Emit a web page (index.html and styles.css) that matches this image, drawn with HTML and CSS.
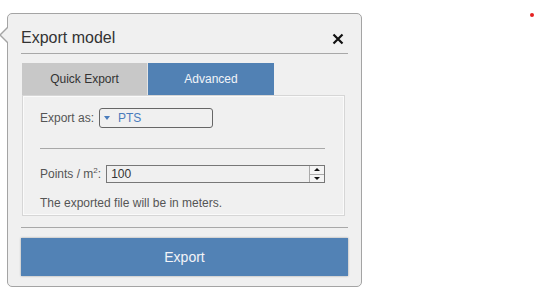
FILE: index.html
```html
<!DOCTYPE html>
<html>
<head>
    <meta charset="UTF-8">
    <meta name="viewport" content="width=device-width, initial-scale=1.0">
    <link rel="stylesheet" href="styles.css">
</head>
<body>
    <span class="dot"></span>
    <div class="popover">
        <div class="popover-header">
            <h2 class="title">Export model</h2>
            <span class="close">
                <svg width="12" height="12" viewBox="0 0 12 12">
                    <path d="M1.5 1.5 L10.5 10.5 M10.5 1.5 L1.5 10.5" stroke="#111" stroke-width="2.2" fill="none"/>
                </svg>
            </span>
        </div>

        <div class="tabs">
            <div class="tab">Quick Export</div>
            <div class="tab active">Advanced</div>
        </div>

        <div class="tab-body">
            <div class="form-row first">
                <label>Export as:</label>
                <div class="select">
                    <span class="caret"></span>
                    <span>PTS</span>
                </div>
            </div>

            <div class="sep"></div>

            <div class="form-row second">
                <label>Points / m<sup>2</sup>:</label>
                <div class="number">
                    <span class="value">100</span>
                    <span class="spin">
                        <span class="spin-up"></span>
                        <span class="spin-down"></span>
                    </span>
                </div>
            </div>

            <p class="note">The exported file will be in meters.</p>
        </div>

        <div class="footer-line"></div>

        <button type="button" class="export-btn">Export</button>
    </div>
</body>
</html>
```

FILE: styles.css
```css
* {
    box-sizing: border-box;
}

body {
    margin: 0;
    background-color: #fff;
    font-family: "Liberation Sans", Arial, sans-serif;
    color: #444;
}

.dot {
    position: absolute;
    left: 530px;
    top: 13px;
    width: 4px;
    height: 4px;
    border-radius: 2px;
    background-color: #e52222;
}

.popover {
    position: relative;
    margin: 13px 0 0 7px;
    width: 355px;
    height: 274px;
    background-color: #f0f0f0;
    border: 1px solid #a4a4a4;
    border-radius: 5px;
    padding: 0 13px 0 13px;
}

/* left pointer */
.popover::before,
.popover::after {
    content: "";
    position: absolute;
    top: 13px;
    width: 0;
    height: 0;
    border-top: 8px solid transparent;
    border-bottom: 8px solid transparent;
}

.popover::before {
    left: -9px;
    border-right: 8px solid #a4a4a4;
}

.popover::after {
    left: -7px;
    border-right: 8px solid #f0f0f0;
}

.popover-header {
    display: flex;
    align-items: center;
    justify-content: space-between;
    height: 40px;
    padding-top: 9px;
    border-bottom: 1px solid #a8a8a8;
}

.title {
    margin: 0;
    font-size: 16px;
    font-weight: normal;
    line-height: 20px;
    color: #333;
}

.close {
    display: flex;
    margin-right: 4px;
    margin-top: 1px;
}

.tabs {
    display: flex;
    margin: 9px 3px 0 1px;
    height: 32px;
}

.tab {
    width: 126px;
    display: flex;
    align-items: center;
    justify-content: center;
    font-size: 12px;
    color: #333;
    background-color: #c8c8c8;
    border-right: 1px solid #e4e4e4;
}

.tab.active {
    background-color: #5181b4;
    color: #f2f4f8;
    border-right: none;
}

.tab-body {
    margin: 0 3px 0 1px;
    border: 1px solid #d6d6d6;
    box-shadow: inset 1px 1px 0 #fafafa, inset -1px -1px 0 #fafafa;
    padding: 12px 19px 5px 17px;
}

.form-row {
    display: flex;
    align-items: center;
    font-size: 12px;
    color: #555;
}

.form-row label {
    margin-right: 5px;
}

.select {
    width: 114px;
    height: 20px;
    border: 1px solid #666;
    border-radius: 3px;
    display: flex;
    align-items: center;
    padding-left: 4px;
    color: #4a7cbc;
}

.caret {
    width: 0;
    height: 0;
    border-left: 3px solid transparent;
    border-right: 3px solid transparent;
    border-top: 4px solid #4a7cbc;
    margin-right: 8px;
}

.sep {
    height: 1px;
    background-color: #a8a8a8;
    margin-top: 20px;
}

.form-row.second {
    margin-top: 16px;
}

.form-row sup {
    font-size: 8px;
    line-height: 0;
}

.number {
    flex: 1;
    height: 18px;
    border: 1px solid #777;
    display: flex;
    align-items: center;
    justify-content: space-between;
    padding-left: 4px;
    color: #333;
}

.spin {
    width: 15px;
    height: 16px;
    border-left: 1px solid #aaa;
    display: flex;
    flex-direction: column;
    background-color: #f4f4f4;
}

.spin-up,
.spin-down {
    flex: 1;
    display: flex;
    align-items: center;
    justify-content: center;
}

.spin-up {
    border-bottom: 1px solid #aaa;
}

.spin-up::after,
.spin-down::after {
    content: "";
    width: 0;
    height: 0;
    border-left: 3px solid transparent;
    border-right: 3px solid transparent;
}

.spin-up::after {
    border-bottom: 3px solid #111;
}

.spin-down::after {
    border-top: 3px solid #111;
}

.note {
    margin: 13px 0 0 0;
    font-size: 12px;
    line-height: 14px;
    color: #555;
}

.footer-line {
    height: 1px;
    background-color: #a8a8a8;
    margin-top: 11px;
}

.export-btn {
    display: block;
    width: 100%;
    height: 38px;
    margin-top: 10px;
    border: none;
    background-color: #5282b5;
    color: #f2f4f8;
    font-family: "Liberation Sans", Arial, sans-serif;
    font-size: 14px;
    box-shadow: 0 0 2px rgba(0, 0, 0, 0.35);
}
```
